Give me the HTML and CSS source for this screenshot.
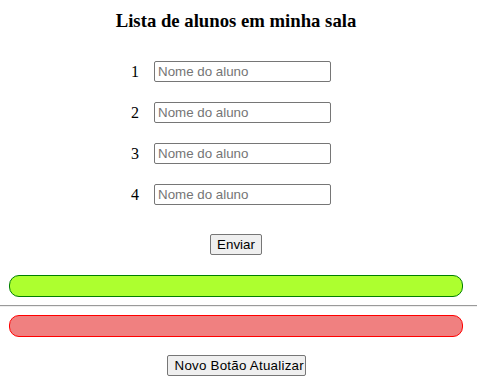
FILE: index.html
```html
<!DOCTYPE html>
<html lang="pt">
<head>
<meta charset="utf-8">
<title>Lista de alunos</title>
<link rel="stylesheet" href="styles.css">
</head>
<body>
<div class="page">
  <h3 class="title">Lista de alunos em minha sala</h3>
  <form class="list">
    <div class="row"><span class="num">1</span><input class="field" type="text" placeholder="Nome do aluno"></div>
    <div class="row"><span class="num">2</span><input class="field" type="text" placeholder="Nome do aluno"></div>
    <div class="row"><span class="num">3</span><input class="field" type="text" placeholder="Nome do aluno"></div>
    <div class="row"><span class="num">4</span><input class="field" type="text" placeholder="Nome do aluno"></div>
    <div class="actions"><button class="btn" type="button">Enviar</button></div>
  </form>
  <div class="bar bar-ok"></div>
  <hr class="sep">
  <div class="bar bar-err"></div>
  <div class="actions bottom"><button class="btn btn-wide" type="button">Novo Botão Atualizar</button></div>
</div>
</body>
</html>
```
FILE: styles.css
```css
html, body {
  margin: 0;
  padding: 0;
  background: #fff;
}
.page {
  width: 477px;
  font-family: "Liberation Serif", "Times New Roman", serif;
  color: #000;
}
.title {
  margin: 10px 0 0;
  width: 472px;
  text-align: center;
  font-size: 18.72px;
  font-weight: bold;
  line-height: 22px;
}
.list {
  margin: 29px 0 0;
  display: flex;
  flex-direction: column;
  gap: 20px;
}
.row {
  display: flex;
  align-items: center;
  height: 21px;
  padding-left: 131px;
}
.num {
  width: 8px;
  margin-right: 15px;
  font-size: 16px;
  line-height: 18px;
}
.field {
  box-sizing: border-box;
  width: 177px;
  height: 21px;
  margin: 0;
  padding: 1px 3px;
  border: 1px solid #767676;
  border-radius: 2px;
  font-family: "Liberation Sans", Arial, sans-serif;
  font-size: 13.33px;
  color: #000;
  background: #fff;
}
.field::placeholder {
  color: #757575;
}
.actions {
  display: flex;
  justify-content: center;
  width: 472px;
  margin-top: 9px;
}
.btn {
  box-sizing: border-box;
  height: 21px;
  margin: 0;
  padding: 1px 6px;
  border: 1px solid #767676;
  border-radius: 2px;
  background: #efefef;
  font-family: "Liberation Sans", Arial, sans-serif;
  font-size: 13.33px;
  color: #000;
  white-space: nowrap;
}
.bar {
  box-sizing: border-box;
  width: 454px;
  height: 22px;
  margin-left: 9px;
  border-radius: 10px;
}
.bar-ok {
  margin-top: 20px;
  background: #adff2f;
  border: 1px solid #008000;
}
.sep {
  margin: 8px 0 0;
  height: 0;
  border: none;
  border-top: 1px solid #9a9a9a;
  border-bottom: 1px solid #eeeeee;
}
.bar-err {
  margin-top: 8px;
  background: #f08080;
  border: 1px solid #ff0000;
}
.bottom {
  margin-top: 18px;
}
.btn-wide {
  width: 139px;
  padding: 1px 0 1px 7px;
  text-align: left;
  letter-spacing: 0.25px;
}
```
